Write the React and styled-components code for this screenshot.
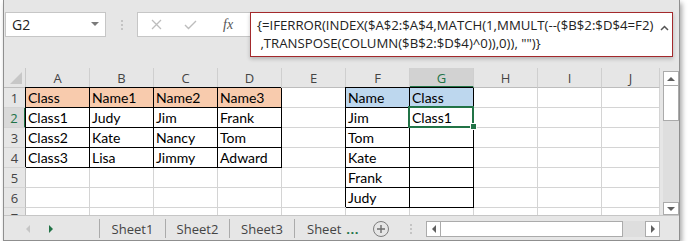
import React from 'react';
import styled, { createGlobalStyle, css } from 'styled-components';

const GlobalStyle = createGlobalStyle`
  body {
    margin: 0;
    background: #ffffff;
  }
`;

const Window = styled.div`
  margin-left: 3px;
  width: 677px;
  height: 241px;
  box-sizing: border-box;
  background: #e6e6e6;
  border: 1px solid #8f8f8f;
  border-top: none;
  box-shadow: 2px 3px 5px rgba(0, 0, 0, 0.35);
  display: flex;
  flex-direction: column;
  font-family: 'Open Sans', 'Noto Sans', sans-serif;
  color: #444;
`;

const Toolbar = styled.div`
  height: 68px;
  flex: none;
  display: flex;
  align-items: flex-start;
  padding: 12px 0 0 1px;
  box-sizing: border-box;
`;

const NameBox = styled.div`
  width: 101px;
  height: 25px;
  box-sizing: border-box;
  background: #fff;
  border: 1px solid #c6c6c6;
  display: flex;
  align-items: center;
  justify-content: space-between;
  padding: 0 6px 0 6px;
  font-size: 14px;
  color: #222;
`;

const DropArrow = styled.span`
  width: 0;
  height: 0;
  border-left: 4px solid transparent;
  border-right: 4px solid transparent;
  border-top: 4px solid #7a7a7a;
  margin-top: -2px;
`;

const Grip = styled.div`
  width: 31px;
  height: 25px;
  display: flex;
  flex-direction: column;
  align-items: center;
  justify-content: center;
  gap: 2px;

  span {
    width: 2px;
    height: 2px;
    background: #c4c4c4;
  }
`;

const ToolBox = styled.div`
  width: 113px;
  height: 25px;
  box-sizing: border-box;
  background: #fff;
  border: 1px solid #c6c6c6;
  border-right: none;
  display: flex;
  align-items: center;
  padding-left: 13px;
  gap: 22px;
`;

const FxLabel = styled.span`
  font-family: 'Liberation Serif', serif;
  font-style: italic;
  font-size: 14px;
  color: #555;
  margin-left: 4px;
`;

const FormulaBox = styled.div`
  width: 423px;
  height: 45px;
  box-sizing: border-box;
  background: #fff;
  border: 1px solid #a3292c;
  box-shadow: 0 2px 4px rgba(0, 0, 0, 0.22);
  display: flex;
  justify-content: space-between;
  padding: 3px 0 0 6px;
  position: relative;
  z-index: 3;
`;

const FormulaText = styled.div`
  font-size: 13.2px;
  line-height: 18px;
  color: #222;
  white-space: pre;
`;

const Caret = styled.svg`
  flex: none;
  margin: 9px 3px 0 0;
`;

const SheetArea = styled.div`
  height: 147px;
  flex: none;
  display: flex;
`;

const Grid = styled.div`
  width: 656px;
  height: 147px;
  overflow: hidden;
  display: grid;
  grid-template-columns: 22px repeat(9, 64px) 58px;
  grid-auto-rows: 20px;
  background: #fff;
  align-content: start;
`;

const Corner = styled.div`
  background: #e6e6e6;
  border-right: 1px solid #c8c8c8;
  border-bottom: 1px solid #bdbdbd;
  box-sizing: border-box;
  display: flex;
  align-items: flex-end;
  justify-content: flex-end;
  padding: 0 3px 3px 0;

  span {
    width: 0;
    height: 0;
    border-left: 12px solid transparent;
    border-bottom: 12px solid #c7c7c7;
  }
`;

const ColHead = styled.div`
  background: ${p => (p.$active ? '#d2d2d2' : '#e6e6e6')};
  border-right: 1px solid #cfcfcf;
  border-bottom: ${p => (p.$active ? '2px solid #217346' : '1px solid #bdbdbd')};
  box-sizing: border-box;
  display: flex;
  align-items: center;
  justify-content: center;
  font-size: 13px;
  color: ${p => (p.$active ? '#217346' : '#444')};
  padding-top: ${p => (p.$active ? '1px' : '0')};
`;

const RowHead = styled.div`
  background: ${p => (p.$active ? '#d9d9d9' : '#e6e6e6')};
  border-right: ${p => (p.$active ? '2px solid #217346' : '1px solid #bdbdbd')};
  border-bottom: 1px solid #d4d4d4;
  box-sizing: border-box;
  display: flex;
  align-items: center;
  justify-content: center;
  font-size: 13px;
  color: ${p => (p.$active ? '#217346' : '#444')};
`;

const Cell = styled.div`
  background: ${p => p.$fill || '#fff'};
  border-right: 1px solid #d4d4d4;
  border-bottom: 1px solid #d4d4d4;
  box-sizing: border-box;
  font-family: Lato, 'Noto Sans', sans-serif;
  font-size: 14px;
  line-height: 19px;
  color: #000;
  padding-left: 2px;
  white-space: nowrap;
  position: relative;

  ${p =>
    p.$boxed &&
    css`
      border-right-color: #000;
      border-bottom-color: #000;
      box-shadow: -1px -1px 0 #000;
    `}

  ${p =>
    p.$selected &&
    css`
      z-index: 2;

      &::after {
        content: '';
        position: absolute;
        top: -2px;
        left: -2px;
        right: -1px;
        bottom: -1px;
        border: 2px solid #217346;
      }

      &::before {
        content: '';
        position: absolute;
        right: -3px;
        bottom: -2px;
        width: 5px;
        height: 5px;
        background: #217346;
        border: 1px solid #fff;
        box-sizing: content-box;
        margin: -1px;
        z-index: 1;
      }
    `}
`;

const ScrollColumn = styled.div`
  width: 19px;
  padding: 3px 0 0 3px;
  box-sizing: border-box;
`;

const VScroll = styled.div`
  width: 16px;
  height: 144px;
  box-sizing: border-box;
  background: #dedede;
  display: flex;
  flex-direction: column;
`;

const ScrollButton = styled.div`
  flex: none;
  width: ${p => (p.$w ? `${p.$w}px` : '100%')};
  height: ${p => (p.$h ? `${p.$h}px` : '100%')};
  box-sizing: border-box;
  background: #fff;
  border: 1px solid #ababab;
  display: flex;
  align-items: center;
  justify-content: center;
`;

const ScrollTrack = styled.div`
  flex: 1;
`;

const TabBar = styled.div`
  flex: 1;
  border-top: 1px solid #c6c6c6;
  display: flex;
  align-items: center;
  font-size: 13px;
  color: #444;
`;

const NavArrows = styled.div`
  width: 96px;
  height: 19px;
  display: flex;
  align-items: center;
  padding-left: 22px;
  gap: 19px;
  box-sizing: border-box;
  border-right: 1px solid #ababab;
`;

const Tab = styled.div`
  width: ${p => p.$w}px;
  height: 19px;
  display: flex;
  align-items: center;
  justify-content: ${p => (p.$left ? 'flex-start' : 'center')};
  padding-left: ${p => (p.$left ? '12px' : '0')};
  box-sizing: border-box;
  border-right: ${p => (p.$last ? 'none' : '1px solid #ababab')};
  white-space: nowrap;
`;

const MoreDots = styled.span`
  color: #217346;
  font-weight: 700;
  margin-left: 5px;
  letter-spacing: 0.5px;
`;

const AddSheet = styled.div`
  width: 14px;
  height: 14px;
  border: 1px solid #7d7d7d;
  border-radius: 50%;
  margin-left: 14px;
  display: flex;
  align-items: center;
  justify-content: center;
`;

const TabGrip = styled(Grip)`
  width: auto;
  margin: 0 14px 0 21px;
`;

const HScroll = styled.div`
  width: 234px;
  height: 16px;
  background: #dedede;
  display: flex;
`;

const Tri = ({ dir, color = '#606060', size = 4 }) => {
  const s = size;
  const pts = {
    up: `0,${s} ${s},0 ${2 * s},${s}`,
    down: `0,0 ${2 * s},0 ${s},${s}`,
    left: `${s},0 ${s},${2 * s} 0,${s}`,
    right: `0,0 0,${2 * s} ${s},${s}`,
  }[dir];
  const vertical = dir === 'up' || dir === 'down';
  return (
    <svg width={vertical ? 2 * s : s} height={vertical ? s : 2 * s}>
      <polygon points={pts} fill={color} />
    </svg>
  );
};

const columns = ['A', 'B', 'C', 'D', 'E', 'F', 'G', 'H', 'I', 'J'];

const data = [
  ['Class', 'Name1', 'Name2', 'Name3', '', 'Name', 'Class'],
  ['Class1', 'Judy', 'Jim', 'Frank', '', 'Jim', 'Class1'],
  ['Class2', 'Kate', 'Nancy', 'Tom', '', 'Tom', ''],
  ['Class3', 'Lisa', 'Jimmy', 'Adward', '', 'Kate', ''],
  ['', '', '', '', '', 'Frank', ''],
  ['', '', '', '', '', 'Judy', ''],
  [],
];

const PEACH = '#f8cbad';
const BLUE = '#bdd7ee';

const cellStyle = (r, c) => {
  const inLeft = r <= 3 && c <= 3;
  const inRight = r <= 5 && (c === 5 || c === 6);
  let fill;
  if (r === 0 && c <= 3) fill = PEACH;
  if (r === 0 && (c === 5 || c === 6)) fill = BLUE;
  return { boxed: inLeft || inRight, fill, selected: r === 1 && c === 6 };
};

const App = () => {
  return (
    <>
      <GlobalStyle />
      <Window>
        <Toolbar>
          <NameBox>
            G2
            <DropArrow />
          </NameBox>
          <Grip>
            <span />
            <span />
            <span />
          </Grip>
          <ToolBox>
            <svg width="11" height="11" viewBox="0 0 11 11">
              <path d="M1 1 L10 10 M10 1 L1 10" stroke="#bdbdbd" strokeWidth="1.3" />
            </svg>
            <svg width="13" height="10" viewBox="0 0 13 10">
              <path d="M1 5 L4.5 8.5 L12 1" stroke="#bdbdbd" strokeWidth="1.4" fill="none" />
            </svg>
            <FxLabel>fx</FxLabel>
          </ToolBox>
          <FormulaBox>
            <FormulaText>
              {'{=IFERROR(INDEX($A$2:$A$4,MATCH(1,MMULT(--($B$2:$D$4=F2)\n ,TRANSPOSE(COLUMN($B$2:$D$4)^0)),0)), "")}'}
            </FormulaText>
            <Caret width="9" height="6" viewBox="0 0 9 6">
              <path d="M1 5 L4.5 1.5 L8 5" stroke="#555" strokeWidth="1.5" fill="none" />
            </Caret>
          </FormulaBox>
        </Toolbar>

        <SheetArea>
          <Grid>
            <Corner>
              <span />
            </Corner>
            {columns.map(col => (
              <ColHead key={col} $active={col === 'G'}>
                {col}
              </ColHead>
            ))}
            {data.map((row, r) => (
              <React.Fragment key={r}>
                <RowHead $active={r === 1}>{r + 1}</RowHead>
                {columns.map((col, c) => {
                  const s = cellStyle(r, c);
                  return (
                    <Cell key={col} $fill={s.fill} $boxed={s.boxed} $selected={s.selected}>
                      {row[c] || ''}
                    </Cell>
                  );
                })}
              </React.Fragment>
            ))}
          </Grid>
          <ScrollColumn>
            <VScroll>
              <ScrollButton $h={15}>
                <Tri dir="up" />
              </ScrollButton>
              <ScrollButton $h={35} style={{ borderTop: 'none' }} />
              <ScrollTrack />
              <ScrollButton $h={13}>
                <Tri dir="down" />
              </ScrollButton>
            </VScroll>
          </ScrollColumn>
        </SheetArea>

        <TabBar>
          <NavArrows>
            <Tri dir="left" color="#c6c6c6" />
            <Tri dir="right" color="#217346" />
          </NavArrows>
          <Tab $w={66}>Sheet1</Tab>
          <Tab $w={64}>Sheet2</Tab>
          <Tab $w={65}>Sheet3</Tab>
          <Tab $w={64} $left $last>
            Sheet
            <MoreDots>...</MoreDots>
          </Tab>
          <AddSheet>
            <svg width="8" height="8" viewBox="0 0 8 8">
              <path d="M4 0 V8 M0 4 H8" stroke="#6d6d6d" strokeWidth="1.4" />
            </svg>
          </AddSheet>
          <TabGrip>
            <span />
            <span />
            <span />
          </TabGrip>
          <HScroll>
            <ScrollButton $w={15}>
              <Tri dir="left" />
            </ScrollButton>
            <ScrollButton $w={182} style={{ borderLeft: 'none' }} />
            <ScrollTrack />
            <ScrollButton $w={15}>
              <Tri dir="right" />
            </ScrollButton>
          </HScroll>
        </TabBar>
      </Window>
    </>
  );
};

export default App;
